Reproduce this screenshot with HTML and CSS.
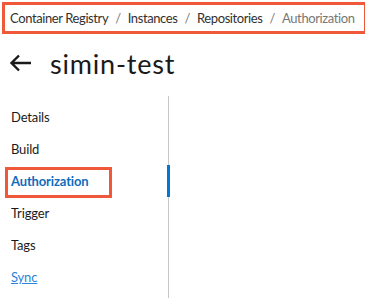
FILE: index.html
```html
<!DOCTYPE html>
<html>
<head>
<meta charset="utf-8">
<link rel="stylesheet" href="styles.css">
</head>
<body>
<div class="breadcrumb">
  <span class="crumb">Container Registry</span><span class="sep">/</span><span class="crumb">Instances</span><span class="sep">/</span><span class="crumb">Repositories</span><span class="sep">/</span><span class="crumb current">Authorization</span>
</div>
<div class="title-row">
  <svg class="back" width="24" height="20" viewBox="0 0 24 20"><path d="M22 10H3M10 2.5L2.5 10L10 17.5" fill="none" stroke="#1a1a1a" stroke-width="2.4"/></svg>
  <h1 class="title">simin-test</h1>
</div>
<div class="main">
  <nav class="nav">
    <div class="nav-item">Details</div>
    <div class="nav-item">Build</div>
    <div class="nav-item active">Authorization<span class="highlight"></span></div>
    <div class="nav-item">Trigger</div>
    <div class="nav-item">Tags</div>
    <div class="nav-item"><a class="link">Sync</a></div>
  </nav>
  <div class="content"></div>
</div>
</body>
</html>
```
FILE: styles.css
```css
html, body {
  margin: 0;
  padding: 0;
  background: #fff;
  font-family: "Lato", "Noto Sans", sans-serif;
  color: #1a1a1a;
}
body {
  width: 365px;
  height: 298px;
  overflow: hidden;
}
.breadcrumb {
  margin: 2px 0 0 2px;
  width: 354px;
  height: 26px;
  border: 3px solid #f0583a;
  display: flex;
  align-items: center;
  padding-left: 5px;
  box-sizing: content-box;
  font-size: 13px;
  letter-spacing: -0.4px;
  white-space: nowrap;
}
.crumb { color: #323130; }
.crumb.current { color: #797775; }
.sep { color: #797775; margin: 0 7px; }
.title-row {
  display: flex;
  align-items: center;
  height: 58px;
  padding-left: 9px;
}
.back { margin-right: 17px; }
.title {
  margin: 0;
  font-size: 27px;
  font-weight: 400;
  letter-spacing: 0.8px;
}
.main {
  display: flex;
  margin-top: 4px;
}
.nav {
  width: 168px;
  padding-top: 5px;
}
.nav-item {
  position: relative;
  height: 32px;
  line-height: 32px;
  padding-left: 11px;
  font-size: 13px;
  letter-spacing: -0.15px;
  color: #1a1a1a;
}
.nav-item.active {
  color: #0f6cbd;
  font-weight: 700;
}
.nav-item.active::after {
  content: "";
  position: absolute;
  right: -2px;
  top: 0;
  width: 3px;
  height: 32px;
  background: #0078d4;
}
.highlight {
  position: absolute;
  left: 5px;
  top: 2px;
  width: 101px;
  height: 25px;
  border: 3px solid #f0583a;
}
.link {
  color: #2a84de;
  text-decoration: underline;
}
.content {
  flex: 1;
  border-left: 1px solid #c8c6c4;
  height: 210px;
}
```
